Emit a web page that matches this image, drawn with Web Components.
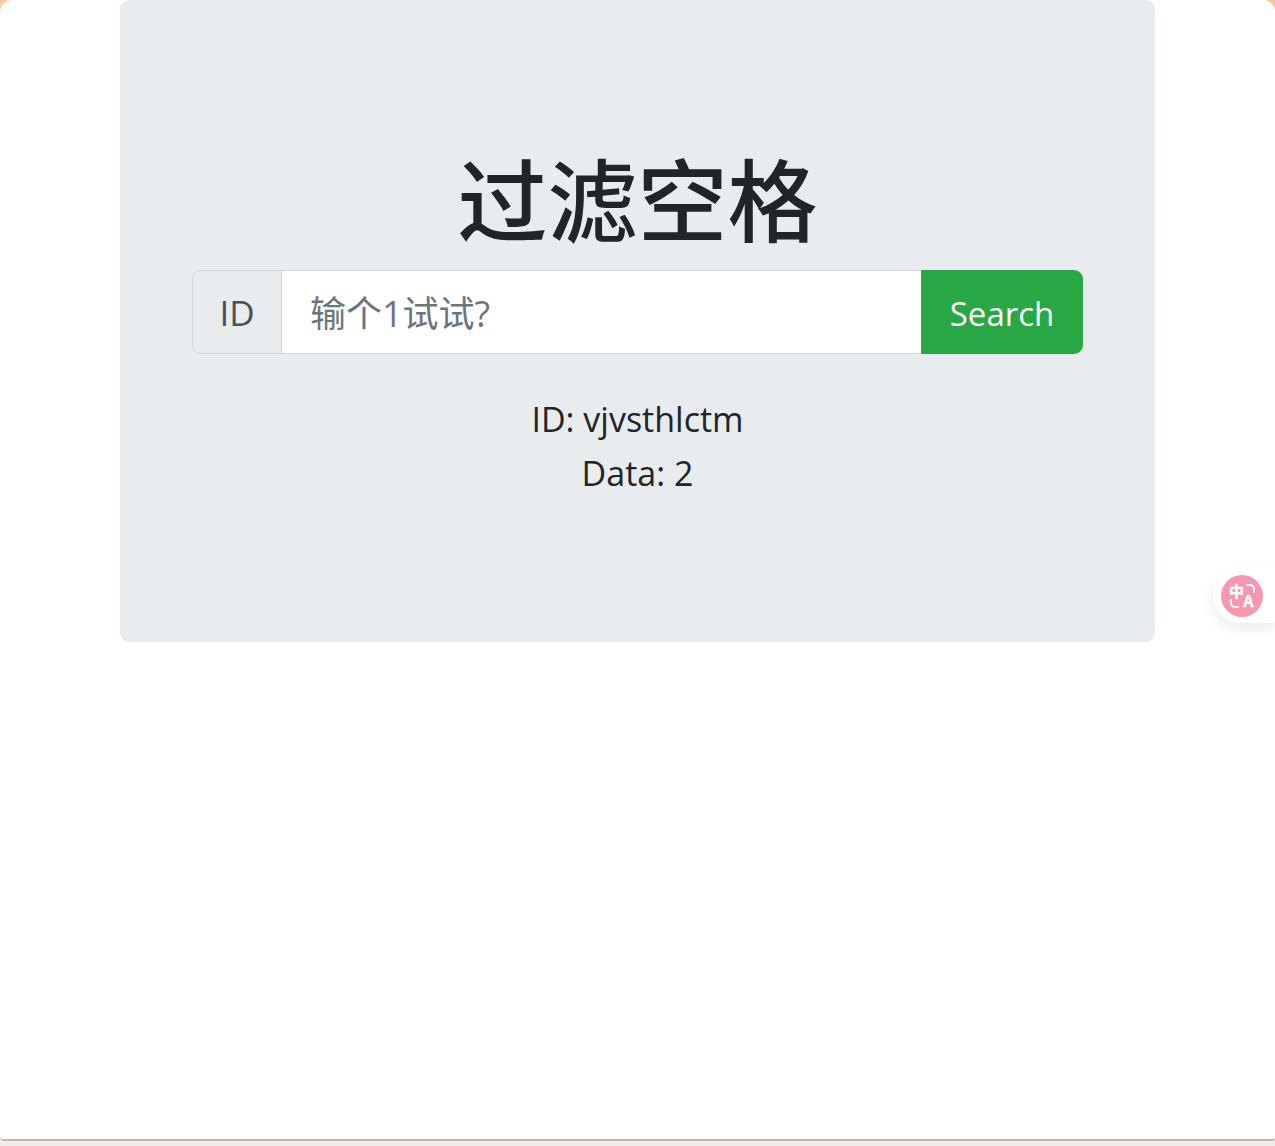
<!DOCTYPE html>
<html lang="zh">
<head>
<meta charset="utf-8">
<title>过滤空格</title>
<style>
  html, body { margin: 0; height: 100%; }
  body {
    background: #f1ece7;
    font-family: "Open Sans", "Noto Sans CJK SC", sans-serif;
    color: #212529;
  }
</style>
</head>
<body>
<app-window>
  <page-jumbotron>
    <span slot="title">过滤空格</span>
    <id-search placeholder="输个1试试?" label="ID" action="Search"></id-search>
    <result-line>ID: vjvsthlctm</result-line>
    <result-line>Data: 2</result-line>
  </page-jumbotron>
  <translate-widget></translate-widget>
</app-window>

<script>
class AppWindow extends HTMLElement {
  constructor() {
    super()
    this.attachShadow({ mode: "open" }).innerHTML = `<style>
      :host {
        display: block;
        position: relative;
        height: 1146px;
        box-sizing: border-box;
        overflow: hidden;
        background: linear-gradient(#f7c9a0 0, #f7c9a0 20px, #f1ece7 20px);
      }
      .win {
        height: 1141px;
        box-sizing: border-box;
        background: #fff;
        border-radius: 12px 12px 4px 4px;
        border-bottom: 2px solid #bdb9b6;
      }
    </style><div class="win"><slot></slot></div>`
  }
}

class PageJumbotron extends HTMLElement {
  constructor() {
    super()
    this.attachShadow({ mode: "open" }).innerHTML = `<style>
      :host {
        display: block;
        box-sizing: border-box;
        width: 1035px;
        height: 642px;
        margin: 0 auto;
        padding: 145px 72px 0;
        background: #e9ecef;
        border-radius: 9px;
      }
      h1 {
        margin: 0 0 15px;
        font-size: 90px;
        font-weight: 500;
        line-height: 110px;
        text-align: center;
        color: #212529;
      }
    </style><h1><slot name="title"></slot></h1><slot></slot>`
  }
}

class IdSearch extends HTMLElement {
  constructor() {
    super()
    const label = this.getAttribute("label")
    const action = this.getAttribute("action")
    const placeholder = this.getAttribute("placeholder")
    this.attachShadow({ mode: "open" }).innerHTML = `<style>
      :host { display: flex; height: 84px; margin-bottom: 38px; font-size: 33px; }
      .prefix {
        box-sizing: border-box;
        width: 90px;
        padding-top: 1px;
        display: flex;
        align-items: center;
        justify-content: center;
        font-size: 35px;
        color: #495057;
        background: #e9ecef;
        border: 1px solid #ced4da;
        border-radius: 9px 0 0 9px;
      }
      input {
        flex: 1;
        min-width: 0;
        box-sizing: border-box;
        margin: 0 0 0 -1px;
        padding: 2px 28px 0;
        font: inherit;
        font-size: 36px;
        color: #495057;
        background: #fff;
        border: 1px solid #ced4da;
        border-right: 0;
        border-radius: 0;
        outline: 0;
      }
      input::placeholder { color: #6c757d; opacity: 1; }
      button {
        width: 162px;
        margin: 0;
        padding: 3px 0 0;
        font: inherit;
        color: #fff;
        background: #28a745;
        border: 0;
        border-radius: 0 9px 9px 0;
      }
    </style>
    <span class="prefix">${label}</span>
    <input type="text" placeholder="${placeholder}">
    <button type="button">${action}</button>`
  }
}

class ResultLine extends HTMLElement {
  constructor() {
    super()
    this.attachShadow({ mode: "open" }).innerHTML = `<style>
      :host {
        display: block;
        font-size: 34px;
        line-height: 54px;
        text-align: center;
      }
    </style><slot></slot>`
  }
}

class TranslateWidget extends HTMLElement {
  constructor() {
    super()
    this.attachShadow({ mode: "open" }).innerHTML = `<style>
      :host {
        position: absolute;
        top: 568px;
        right: 0;
        width: 62px;
        height: 55px;
        box-sizing: border-box;
        padding: 7px 0 0 8px;
        background: #fff;
        border-radius: 28px 0 0 28px;
        box-shadow: 0 6px 14px rgba(0, 0, 0, .08);
      }
      svg { display: block; }
      text {
        font-family: "Noto Sans CJK SC", "Open Sans", sans-serif;
        font-weight: 700;
        fill: #fff;
        stroke: #fff;
        stroke-width: .4px;
      }
    </style>
    <svg width="42" height="42" viewBox="0 0 42 42">
      <circle cx="21" cy="21" r="21" fill="#f498b0"/>
      <text x="15.5" y="22" font-size="15" text-anchor="middle">中</text>
      <text x="27.5" y="32" font-size="16" text-anchor="middle">A</text>
      <path d="M26 10h3a4 4 0 0 1 4 4v3M10 25v3a4 4 0 0 0 4 4h3" fill="none" stroke="#fff" stroke-width="2" stroke-linecap="round"/>
    </svg>`
  }
}

customElements.define("app-window", AppWindow)
customElements.define("page-jumbotron", PageJumbotron)
customElements.define("id-search", IdSearch)
customElements.define("result-line", ResultLine)
customElements.define("translate-widget", TranslateWidget)
</script>
</body>
</html>
